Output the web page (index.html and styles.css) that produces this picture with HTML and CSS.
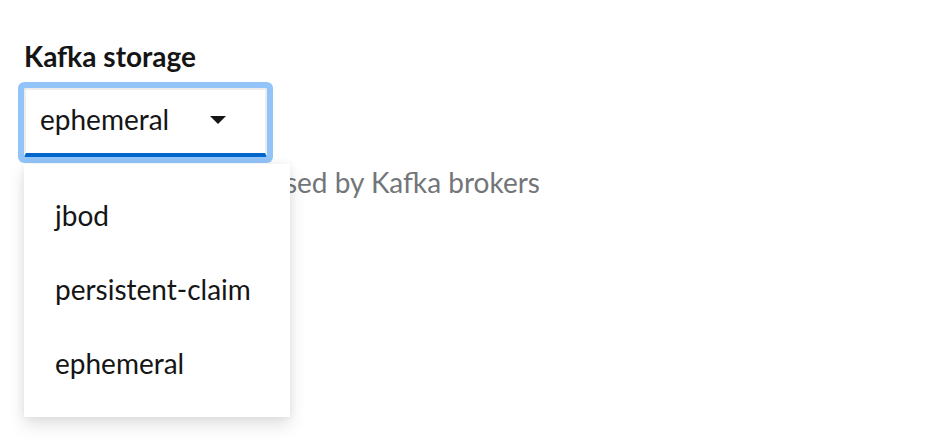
FILE: index.html
```html
<!DOCTYPE html>
<html lang="en">
<head>
<meta charset="utf-8">
<title>Kafka storage</title>
<link rel="stylesheet" href="styles.css">
</head>
<body>
<div class="page">
  <div class="form-group">
    <label class="label" for="storage">Kafka storage</label>
    <div class="select">
      <button class="toggle" id="storage" type="button">
        <span class="toggle-text">ephemeral</span>
        <svg class="caret" width="16" height="8" viewBox="0 0 16 8" aria-hidden="true"><path d="M0 0 L16 0 L8 8 Z" fill="#151515"/></svg>
      </button>
      <ul class="menu">
        <li class="item">jbod</li>
        <li class="item">persistent-claim</li>
        <li class="item">ephemeral</li>
      </ul>
    </div>
    <div class="helper">Storage type that is used by Kafka brokers</div>
  </div>
</div>
</body>
</html>
```
FILE: styles.css
```css
* { box-sizing: border-box; }
html, body { margin: 0; padding: 0; background: #fff; }
body {
  min-height: 448px;
  font-family: Lato, "Liberation Sans", sans-serif;
  font-size: 28px;
  color: #151515;
}
.page { min-height: 448px; padding: 38px 24px 0 24px; }
.form-group { display: flex; flex-direction: column; align-items: flex-start; }
.label {
  font-weight: 700;
  line-height: 36px;
  margin-bottom: 14px;
}
.select { position: relative; }
.toggle {
  display: flex;
  align-items: center;
  justify-content: space-between;
  width: 243px;
  height: 69px;
  padding: 11px 39px 16px 14px;
  background: #fff;
  border: 2px solid #ededed;
  border-bottom: 4px solid #0066cc;
  border-radius: 2px;
  box-shadow: 0 0 0 6px #93c4f9;
  font: inherit;
  color: inherit;
  line-height: 36px;
  text-align: left;
  margin: 0;
}
.caret { display: block; margin-top: 1px; }
.menu {
  position: absolute;
  left: 0;
  top: calc(100% + 7px);
  width: 266px;
  margin: 0;
  padding: 14px 0 17px 0;
  list-style: none;
  background: #fff;
  box-shadow: 0 8px 16px rgba(3, 3, 3, 0.12), 0 0 8px rgba(3, 3, 3, 0.06);
  z-index: 2;
}
.item {
  line-height: 42px;
  padding: 16px 16px 16px 31px;
  white-space: nowrap;
}
.helper {
  margin-top: 7px;
  line-height: 36px;
  color: #737679;
  white-space: nowrap;
}
```
